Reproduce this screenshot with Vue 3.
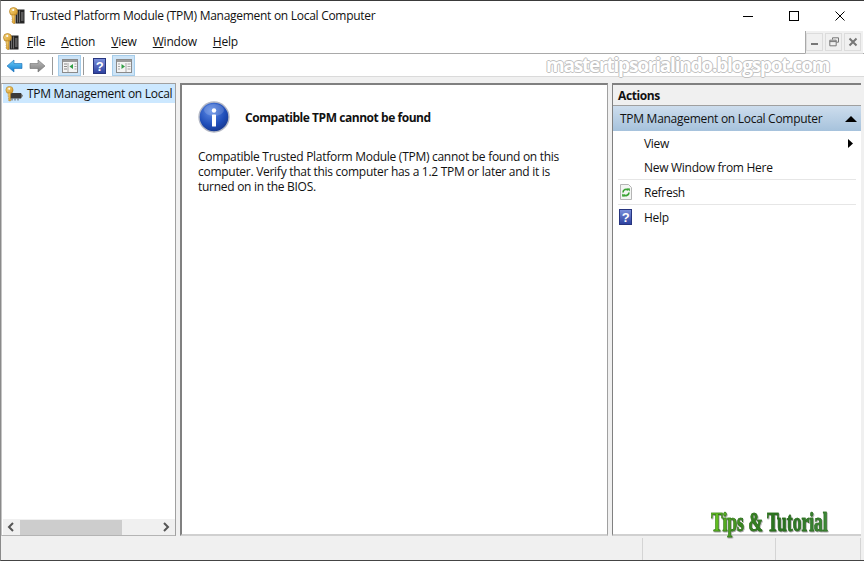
<script setup>
const menus = [
  { key: "F", rest: "ile" },
  { key: "A", rest: "ction" },
  { key: "V", rest: "iew" },
  { key: "W", rest: "indow" },
  { key: "H", rest: "elp" },
];
</script>

<template>
  <div class="window">
    <svg class="defs" width="0" height="0">
      <defs>
        <linearGradient id="keyGold" x1="0" y1="0" x2="1" y2="1">
          <stop offset="0" stop-color="#f8dc88" />
          <stop offset="1" stop-color="#d2941f" />
        </linearGradient>
        <linearGradient id="helpBlue" x1="0" y1="0" x2="0" y2="1">
          <stop offset="0" stop-color="#7d92dc" />
          <stop offset="1" stop-color="#2b3f9e" />
        </linearGradient>
        <linearGradient id="arrowBlue" x1="0" y1="0" x2="0" y2="1">
          <stop offset="0" stop-color="#6fd0f8" />
          <stop offset="1" stop-color="#0f78cf" />
        </linearGradient>
        <linearGradient id="arrowGrey" x1="0" y1="0" x2="0" y2="1">
          <stop offset="0" stop-color="#bdbdbd" />
          <stop offset="1" stop-color="#7c7c7c" />
        </linearGradient>
        <radialGradient id="infoBlue" cx="0.4" cy="0.3" r="0.8">
          <stop offset="0" stop-color="#5d8be6" />
          <stop offset="0.6" stop-color="#1f4db8" />
          <stop offset="1" stop-color="#14307f" />
        </radialGradient>
        <symbol id="keybook" viewBox="0 0 16 17">
          <rect x="6.5" y="2.5" width="9" height="14" fill="#262626" />
          <path d="M8.5 3.5v12M10.5 3.5v12" stroke="#8b8b8b" stroke-width="0.7" />
          <rect x="12" y="5" width="2.5" height="9" fill="#5c5c5c" />
          <circle cx="4.5" cy="4.5" r="4" fill="url(#keyGold)" stroke="#b07a1a" stroke-width="0.7" />
          <circle cx="4.2" cy="3" r="1.1" fill="#fff" />
          <path d="M3 8h3v8.5H4.4L3 15.2v-1l1-.6-1-.7v-1l1-.6-1-.7z" fill="url(#keyGold)" stroke="#b07a1a" stroke-width="0.5" />
        </symbol>
        <symbol id="helpbook" viewBox="0 0 13 16">
          <rect x="0.5" y="0.5" width="12" height="15" fill="url(#helpBlue)" stroke="#27357f" />
          <text x="6.5" y="12.5" text-anchor="middle" class="help-mark">?</text>
        </symbol>
      </defs>
    </svg>

    <header class="titlebar">
      <svg class="title-icon" width="16" height="17"><use href="#keybook" /></svg>
      <span class="title-text">Trusted Platform Module (TPM) Management on Local Computer</span>
      <div class="caption">
        <button class="cap-btn">
          <svg width="12" height="12" viewBox="0 0 12 12"><path d="M1 6.5h10" stroke="#000" fill="none" /></svg>
        </button>
        <button class="cap-btn">
          <svg width="12" height="12" viewBox="0 0 12 12"><rect x="1.5" y="1.5" width="9" height="9" stroke="#000" fill="none" /></svg>
        </button>
        <button class="cap-btn">
          <svg width="12" height="12" viewBox="0 0 12 12"><path d="M1.5 1.5l9 9M10.5 1.5l-9 9" stroke="#000" fill="none" /></svg>
        </button>
      </div>
    </header>

    <div class="menubar">
      <svg class="menu-icon" width="16" height="17"><use href="#keybook" /></svg>
      <nav class="menus">
        <span v-for="m in menus" :key="m.key" class="menu-item"><u>{{ m.key }}</u>{{ m.rest }}</span>
      </nav>
      <div class="mdi">
        <span class="mdi-btn">
          <svg width="10" height="10" viewBox="0 0 10 10"><rect x="1" y="6" width="7" height="2" fill="#777" /></svg>
        </span>
        <span class="mdi-btn">
          <svg width="10" height="10" viewBox="0 0 10 10"><path d="M3.5 2.5V.8h6v4.4H7.5M.8 3.2h6.4v5.6H.8zM.8 4.6h6.4" stroke="#777" fill="none" /></svg>
        </span>
        <span class="mdi-btn">
          <svg width="10" height="10" viewBox="0 0 10 10"><path d="M1.5 1.5l7 7M8.5 1.5l-7 7" stroke="#777" stroke-width="2" fill="none" /></svg>
        </span>
      </div>
    </div>

    <div class="toolbar">
      <svg width="17" height="14" viewBox="0 0 17 14">
        <path d="M1 7l7-6v3.5h8v5H8V13z" fill="url(#arrowBlue)" stroke="#1b6fb5" stroke-width="0.6" />
      </svg>
      <svg class="fwd" width="17" height="14" viewBox="0 0 17 14">
        <path d="M16 7L9 1v3.5H1v5h8V13z" fill="url(#arrowGrey)" stroke="#6f6f6f" stroke-width="0.6" />
      </svg>
      <span class="tool-sep first"></span>
      <span class="tool-btn tree-toggle">
        <svg width="16" height="14" viewBox="0 0 16 14">
          <rect x="0.5" y="0.5" width="15" height="13" fill="#f4f4f4" stroke="#8a8a8a" />
          <rect x="1" y="1" width="14" height="2" fill="#9a9a9a" />
          <path d="M2 5h3M2 7.5h3M2 10h3" stroke="#8a8a8a" />
          <path d="M11 5v5L7.5 7.5z" fill="#2f9e44" />
          <path d="M6 4v9M12.5 5h2M12.5 7.5h2M12.5 10h2" stroke="#a8a8a8" />
        </svg>
      </span>
      <span class="tool-sep second"></span>
      <svg class="tool-help" width="13" height="16"><use href="#helpbook" /></svg>
      <span class="tool-btn pane-toggle">
        <svg width="16" height="14" viewBox="0 0 16 14">
          <rect x="0.5" y="0.5" width="15" height="13" fill="#f4f4f4" stroke="#8a8a8a" />
          <rect x="1" y="1" width="14" height="2" fill="#9a9a9a" />
          <path d="M2 5h2M2 7.5h2M2 10h2M10 4v9M11.5 5h3M11.5 7.5h3M11.5 10h3" stroke="#a8a8a8" />
          <path d="M5.5 5v5L9 7.5z" fill="#2f9e44" />
        </svg>
      </span>
    </div>

    <main class="panes">
      <aside class="tree">
        <div class="tree-body">
          <div class="tree-row">
            <svg width="18" height="16" viewBox="0 0 18 16">
              <rect x="5" y="7" width="11" height="5.5" fill="#3a3a3a" />
              <path d="M16 7l2 2.7-2 2.8z" fill="#6b6b6b" />
              <path d="M7 12.5v2M10 12.5v2M13 12.5v2" stroke="#555" />
              <circle cx="4.5" cy="4" r="3.6" fill="url(#keyGold)" stroke="#b07a1a" stroke-width="0.6" />
              <circle cx="4.2" cy="2.8" r="1" fill="#fff" />
              <path d="M3.2 7h2.4v8H4.2l-1-1 .8-.8-.8-.8.8-.8-.8-.8z" fill="url(#keyGold)" stroke="#b07a1a" stroke-width="0.4" />
            </svg>
            <span>TPM Management on Local</span>
          </div>
        </div>
        <div class="hscroll">
          <svg width="8" height="10" viewBox="0 0 8 10"><path d="M6 1L2 5l4 4" stroke="#555" stroke-width="2" fill="none" /></svg>
          <div class="hscroll-track"><div class="hscroll-thumb"></div></div>
          <svg width="8" height="10" viewBox="0 0 8 10"><path d="M2 1l4 4-4 4" stroke="#555" stroke-width="2" fill="none" /></svg>
        </div>
      </aside>

      <section class="center">
        <div class="notice">
          <svg width="32" height="32" viewBox="0 0 32 32">
            <circle cx="16" cy="16" r="15" fill="url(#infoBlue)" stroke="#b4b8c4" stroke-width="1.4" />
            <ellipse cx="16" cy="9" rx="10" ry="6" fill="#fff" opacity="0.16" />
            <circle cx="16" cy="9.5" r="2.2" fill="#fff" />
            <rect x="14" y="13.5" width="4" height="12" rx="0.6" fill="#fff" />
          </svg>
          <h1 class="notice-title">Compatible TPM cannot be found</h1>
        </div>
        <p class="notice-text">
          Compatible Trusted Platform Module (TPM) cannot be found on this computer. Verify that this computer has a 1.2 TPM or later and it is turned on in the BIOS.
        </p>
      </section>

      <aside class="actions">
        <div class="actions-head">Actions</div>
        <div class="actions-group">
          <span>TPM Management on Local Computer</span>
          <svg width="12" height="6" viewBox="0 0 12 6"><path d="M6 0l6 6H0z" fill="#000" /></svg>
        </div>
        <ul class="action-list">
          <li class="action">
            <span class="action-icon"></span>
            <span>View</span>
            <svg class="submenu" width="5" height="9" viewBox="0 0 5 9"><path d="M0 0l5 4.5L0 9z" fill="#000" /></svg>
          </li>
          <li class="action">
            <span class="action-icon"></span>
            <span>New Window from Here</span>
          </li>
          <li class="action ruled">
            <span class="action-icon">
              <svg width="14" height="16" viewBox="0 0 14 16">
                <path d="M1.5.5h8l3 3v12h-11z" fill="#f3f5f3" stroke="#b5b5b5" />
                <path d="M10 8.5a3.2 3.2 0 0 1-5.6 2M4 8.5a3.2 3.2 0 0 1 5.4-2.3" stroke="#3aa335" stroke-width="1.7" fill="none" />
                <path d="M8 4.3l3 .2-.3 3z" fill="#3aa335" />
                <path d="M6 12.7l-3-.2.3-3z" fill="#3aa335" />
              </svg>
            </span>
            <span>Refresh</span>
          </li>
          <li class="action ruled">
            <span class="action-icon">
              <svg width="13" height="16"><use href="#helpbook" /></svg>
            </span>
            <span>Help</span>
          </li>
        </ul>
      </aside>
    </main>

    <footer class="statusbar">
      <span class="status-cell grow"></span>
      <span class="status-cell mid"></span>
      <span class="status-cell last"></span>
    </footer>

    <div class="wm-url">mastertipsorialindo.blogspot.com</div>
    <div class="wm-brand">Tips &amp; Tutorial</div>
  </div>
</template>

<style scoped>
.window {
  position: relative;
  width: 864px;
  height: 561px;
  box-sizing: border-box;
  display: flex;
  flex-direction: column;
  background: #f0f0f0;
  border-top: 1px solid #3a3a3a;
  border-bottom: 1px solid #444;
  border-left: 1px solid #8a8a8a;
  overflow: hidden;
  font-family: "Open Sans", "Noto Sans", sans-serif;
  font-size: 12px;
  letter-spacing: -0.28px;
  color: #111;
}

.defs {
  position: absolute;
}

.help-mark {
  font-family: "Liberation Sans", sans-serif;
  font-size: 13px;
  font-weight: bold;
  fill: #fff;
}

.titlebar {
  height: 29px;
  display: flex;
  align-items: center;
  background: #fff;
  padding-left: 8px;
  flex: none;
}

.title-icon {
  margin-right: 5px;
}

.title-text {
  white-space: nowrap;
}

.caption {
  margin-left: auto;
  padding-right: 1px;
  display: flex;
}

.cap-btn {
  width: 46px;
  height: 29px;
  border: 0;
  background: none;
  padding: 0;
  display: flex;
  align-items: center;
  justify-content: center;
}

.menubar {
  height: 23px;
  display: flex;
  align-items: center;
  background: #fff;
  padding-left: 2px;
  flex: none;
  border-bottom: 1px solid #a9a9a9;
}

.menu-icon {
  margin-right: 8px;
}

.menus {
  display: flex;
  gap: 16px;
  letter-spacing: -0.2px;
}

.menu-item {
  white-space: nowrap;
}

.mdi {
  margin-left: auto;
  align-self: stretch;
  display: flex;
  gap: 2px;
  width: 58px;
  box-sizing: border-box;
  background: #f0f0f0;
  border-left: 1px solid #a9a9a9;
  padding: 2px 0 2px 0;
  margin-top: 1px;
  margin-right: 1px;
  margin-bottom: -1px;
  border-bottom: 1px solid #d8d8d8;
}

.mdi-btn {
  width: 17px;
  box-sizing: border-box;
  display: flex;
  align-items: center;
  justify-content: center;
  border: 1px solid #dcdcdc;
}

.toolbar {
  height: 21px;
  display: flex;
  align-items: center;
  padding: 1px 0 0 5px;
  background: #fff;
  border-bottom: 1px solid #dadada;
  flex: none;
}

.fwd {
  margin-left: 6px;
}

.tool-sep {
  width: 1px;
  height: 18px;
  background: #9a9a9a;
}

.tool-sep.first {
  margin-left: 6px;
}

.tool-sep.second {
  margin-left: 2px;
}

.tool-btn {
  width: 23px;
  height: 21px;
  box-sizing: border-box;
  display: flex;
  align-items: center;
  justify-content: center;
  background: #cde4f7;
  border: 1px solid #a6cdea;
}

.tree-toggle {
  margin-left: 5px;
}

.pane-toggle {
  margin-left: 6px;
}

.tool-help {
  margin-left: 9px;
}

.panes {
  flex: 1;
  min-height: 0;
  display: grid;
  grid-template-columns: 175px 428px 249px;
  column-gap: 4px;
  padding: 6px 2px 0 0;
  background: #f0f0f0;
}

.tree {
  display: flex;
  flex-direction: column;
  background: #fff;
  border: 1px solid #a0a0a0;
  border-left-color: #c4c4c4;
  border-bottom: 2px solid #b4b4b4;
  padding-left: 1px;
  margin-bottom: -1px;
}

.tree-body {
  flex: 1;
}

.tree-row {
  height: 19px;
  display: flex;
  align-items: center;
  gap: 4px;
  background: #cce8ff;
  padding-left: 2px;
  white-space: nowrap;
  overflow: hidden;
}

.hscroll {
  height: 16px;
  display: flex;
  align-items: center;
  gap: 5px;
  padding: 0 5px 0 4px;
  background: #f0f0f0;
}

.hscroll-track {
  flex: 1;
}

.hscroll-thumb {
  width: 102px;
  height: 15px;
  background: #cdcdcd;
}

.center {
  background: #fff;
  border-left: 2px solid #808080;
  border-top: 2px solid #808080;
  border-right: 1px solid #a0a0a0;
  border-bottom: 2px solid #d0d0d0;
  padding: 16px 16px 0 16px;
}

.notice {
  display: flex;
  align-items: center;
  gap: 15px;
}

.notice-title {
  margin: 0;
  font-size: 12px;
  font-weight: 700;
  letter-spacing: -0.45px;
}

.notice-text {
  margin: 16px 0 0;
  width: 372px;
  line-height: 15px;
}

.actions {
  background: #fff;
  border-left: 1px solid #808080;
  border-top: 2px solid #808080;
  border-bottom: 2px solid #d0d0d0;
}

.actions-head {
  height: 20px;
  display: flex;
  align-items: center;
  padding-left: 5px;
  font-weight: 700;
  letter-spacing: -0.4px;
  background: #f0f0f0;
  border-bottom: 1px solid #a0a0a0;
}

.actions-group {
  height: 25px;
  display: flex;
  align-items: center;
  justify-content: space-between;
  padding: 0 4px 0 7px;
  background: linear-gradient(#cddded, #a6c2dc);
}

.action-list {
  list-style: none;
  margin: 0;
  padding: 0;
}

.action {
  height: 24px;
  margin: 0 5px;
  display: flex;
  align-items: center;
}

.action.ruled {
  height: 25px;
  border-top: 1px solid #e6e6e6;
  box-sizing: border-box;
}

.action-icon {
  width: 26px;
  padding-left: 1px;
  box-sizing: border-box;
  display: flex;
  align-items: center;
}

.submenu {
  margin-left: auto;
  margin-right: 3px;
}

.statusbar {
  height: 24px;
  display: flex;
  flex: none;
  background: #f0f0f0;
  padding: 2px 3px 0 0;
  box-sizing: border-box;
}

.status-cell {
  box-sizing: border-box;
  border-right: 1px solid #d4d4d4;
}

.status-cell.grow {
  flex: 1;
}

.status-cell.mid {
  width: 133px;
}

.status-cell.last {
  width: 85px;
}

.wm-url {
  position: absolute;
  left: 545px;
  top: 51px;
  font-size: 19px;
  font-weight: 700;
  letter-spacing: -1.2px;
  color: #fff;
  text-shadow: 1px 0 0 #c0c0c0, -1px 0 0 #c0c0c0, 0 1px 0 #c0c0c0, 0 -1px 0 #c0c0c0;
  white-space: nowrap;
}

.wm-brand {
  position: absolute;
  left: 710px;
  top: 506px;
  font-family: "Liberation Serif", serif;
  font-size: 27px;
  font-weight: 700;
  letter-spacing: 0;
  color: transparent;
  background: linear-gradient(100deg, #6fcf1f 0%, #3d8a22 25%, #27701f 60%, #3f8a3a 100%);
  -webkit-background-clip: text;
  background-clip: text;
  -webkit-text-stroke: 0.6px #2c6b1c;
  filter: drop-shadow(1px 1px 0 #9a9a9a);
  transform: scaleX(0.65);
  transform-origin: left;
  white-space: nowrap;
}
</style>

<style>
html,
body {
  margin: 0;
  background: #f0f0f0;
}
</style>
